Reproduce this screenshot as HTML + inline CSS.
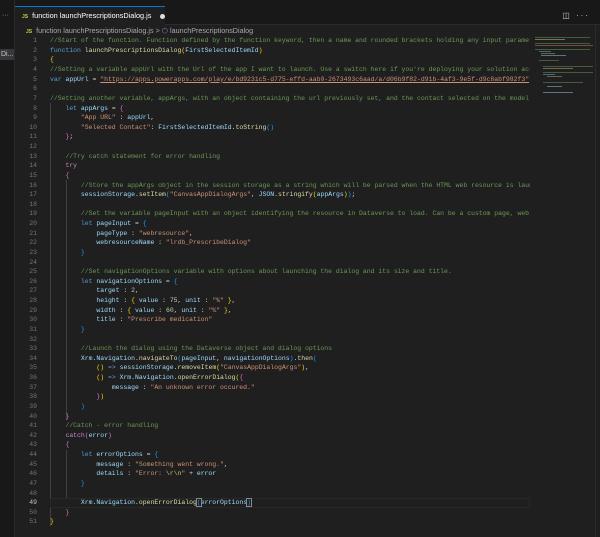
<!DOCTYPE html>
<html><head><meta charset="utf-8"><style>
*{margin:0;padding:0;box-sizing:border-box}
body{width:600px;height:537px;background:#1f1f1f;overflow:hidden;position:relative;font-family:"Liberation Sans",sans-serif}
#title{position:absolute;left:0;top:0;width:600px;height:6px;background:#181818}
#side{position:absolute;left:0;top:0;width:15px;height:537px;background:#181818;border-right:1px solid #2b2b2b}
#side .d{position:absolute;left:0;top:49px;width:14px;height:11px;background:#37373d;color:#ccc;font-size:7px;line-height:11px;padding-left:1px;white-space:nowrap;overflow:hidden}
#side .dots{position:absolute;left:2px;top:12px;color:#aaa;font-size:7px}
#tabs{position:absolute;left:15px;top:6px;width:585px;height:19px;background:#181818;border-bottom:1px solid #2b2b2b}
#tab{position:absolute;left:0;top:0;width:150px;height:19px;background:#1f1f1f;border-top:1px solid #0078d4;color:#fff;font-size:7.3px;line-height:18px;padding-left:7px;white-space:nowrap}
.js{color:#cbcb41;font-weight:bold;font-size:5px;margin-right:4px}
#tab .dot{display:inline-block;width:5px;height:5px;border-radius:50%;background:#ddd;margin-left:9px;vertical-align:middle}
#tabr{position:absolute;right:10px;top:5px;color:#ccc;font-size:8px;letter-spacing:2px}
#crumb{position:absolute;left:26px;top:26px;color:#a9a9a9;font-size:7.2px;white-space:nowrap}
#code{position:absolute;left:15px;top:36.2px;width:515px;height:500px;overflow:hidden}
.ln{position:absolute;left:0;width:22px;text-align:right;color:#6e7681;font-family:"Liberation Mono",monospace;font-size:6.45px;line-height:9.62px}
pre{position:absolute;left:35px;top:0;font-family:"Liberation Mono",monospace;font-size:6.45px;line-height:9.62px;color:#d4d4d4;white-space:pre}
.c{color:#6a9955}.k{color:#569cd6}.f{color:#dcdcaa}.s{color:#ce9178}.v{color:#9cdcfe}.y{color:#ffd700}.p{color:#da70d6}.b{color:#179fff}.x{color:#c586c0}.u{text-decoration:underline;text-decoration-color:#ce9178}
#cur{position:absolute;left:35px;top:461.8px;width:480px;height:9.62px;border:1px solid #282828}
#mini{position:absolute;left:533px;top:36px;width:62px;height:60px}
#mini div{position:absolute;height:1px;background:#5a6d52;opacity:.8}
#sb{position:absolute;left:595px;top:25px;width:5px;height:512px;background:#1f1f1f;border-left:1px solid #2b2b2b}
.g{position:absolute;width:1px;background:#404040}
</style></head><body>
<div id="title"></div>
<div id="side"><div class="dots">···</div><div class="d">Di...</div></div>
<div id="tabs"><div id="tab"><span class="js">JS</span>function launchPrescriptionsDialog.js<span class="dot"></span></div><div id="tabr">◫ ···</div></div>
<div id="crumb"><span class="js">JS</span>function launchPrescriptionsDialog.js &gt; <span style="color:#b180d7">⬡</span> launchPrescriptionsDialog</div>
<div id="code">
<div class="g" style="left:35px;top:67px;height:423px"></div>
<div class="g" style="left:51px;top:144px;height:240px"></div>
<div class="g" style="left:51px;top:414px;height:48px"></div>
<div class="ln">1<br>2<br>3<br>4<br>5<br>6<br>7<br>8<br>9<br>10<br>11<br>12<br>13<br>14<br>15<br>16<br>17<br>18<br>19<br>20<br>21<br>22<br>23<br>24<br>25<br>26<br>27<br>28<br>29<br>30<br>31<br>32<br>33<br>34<br>35<br>36<br>37<br>38<br>39<br>40<br>41<br>42<br>43<br>44<br>45<br>46<br>47<br>48<br><span style="color:#ccc">49</span><br>50<br>51</div>
<div id="cur"></div>
<pre><span class="c">//Start of the function. Function defined by the function keyword, then a name and rounded brackets holding any input parameters</span>
<span class="k">function</span> <span class="f">launchPrescriptionsDialog</span><span class="y">(</span><span class="v">FirstSelectedItemId</span><span class="y">)</span>
<span class="y">{</span>
<span class="c">//Setting a variable appUrl with the Url of the app I want to launch. Use a switch here if you're deploying your solution across</span>
<span class="k">var</span> <span class="v">appUrl</span> = <span class="s u">"https://apps.powerapps.com/play/e/bd9231c5-d775-effd-aab0-2673493c6aad/a/d06b9f82-d91b-4af3-9e5f-d9c8abf982f3"</span>

<span class="c">//Setting another variable, appArgs, with an object containing the url previously set, and the contact selected on the model</span>
    <span class="k">let</span> <span class="v">appArgs</span> = <span class="p">{</span>
        <span class="s">"App URL"</span> : <span class="v">appUrl</span>,
        <span class="s">"Selected Contact"</span>: <span class="v">FirstSelectedItemId</span>.<span class="f">toString</span><span class="b">()</span>
    <span class="p">}</span>;

    <span class="c">//Try catch statement for error handling</span>
    <span class="x">try</span>
    <span class="p">{</span>
        <span class="c">//Store the appArgs object in the session storage as a string which will be parsed when the HTML web resource is launched</span>
        <span class="v">sessionStorage</span>.<span class="f">setItem</span><span class="b">(</span><span class="s">"CanvasAppDialogArgs"</span>, <span class="v">JSON</span>.<span class="f">stringify</span><span class="y">(</span><span class="v">appArgs</span><span class="y">)</span><span class="b">)</span>;

        <span class="c">//Set the variable pageInput with an object identifying the resource in Dataverse to load. Can be a custom page, web</span>
        <span class="k">let</span> <span class="v">pageInput</span> = <span class="b">{</span>
            <span class="v">pageType</span> : <span class="s">"webresource"</span>,
            <span class="v">webresourceName</span> : <span class="s">"lrdb_PrescribeDialog"</span>
        <span class="b">}</span>

        <span class="c">//Set navigationOptions variable with options about launching the dialog and its size and title.</span>
        <span class="k">let</span> <span class="v">navigationOptions</span> = <span class="b">{</span>
            <span class="v">target</span> : <span style="color:#b5cea8">2</span>,
            <span class="v">height</span> : <span class="y">{</span> <span class="v">value</span> : <span style="color:#b5cea8">75</span>, <span class="v">unit</span> : <span class="s">"%"</span> <span class="y">}</span>,
            <span class="v">width</span> : <span class="y">{</span> <span class="v">value</span> : <span style="color:#b5cea8">60</span>, <span class="v">unit</span> : <span class="s">"%"</span> <span class="y">}</span>,
            <span class="v">title</span> : <span class="s">"Prescribe medication"</span>
        <span class="b">}</span>

        <span class="c">//Launch the dialog using the Dataverse object and dialog options</span>
        <span class="v">Xrm</span>.<span class="v">Navigation</span>.<span class="f">navigateTo</span><span class="b">(</span><span class="v">pageInput</span>, <span class="v">navigationOptions</span><span class="b">)</span>.<span class="f">then</span><span class="b">(</span>
            <span class="y">()</span> <span class="k">=&gt;</span> <span class="v">sessionStorage</span>.<span class="f">removeItem</span><span class="y">(</span><span class="s">"CanvasAppDialogArgs"</span><span class="y">)</span>,
            <span class="y">()</span> <span class="k">=&gt;</span> <span class="v">Xrm</span>.<span class="v">Navigation</span>.<span class="f">openErrorDialog</span><span class="y">(</span><span class="p">{</span>
                <span class="v">message</span> : <span class="s">"An unknown error occured."</span>
            <span class="p">}</span><span class="y">)</span>
        <span class="b">)</span>
    <span class="p">}</span>
    <span class="c">//Catch - error handling</span>
    <span class="x">catch</span><span class="p">(</span><span class="v">error</span><span class="p">)</span>
    <span class="p">{</span>
        <span class="k">let</span> <span class="v">errorOptions</span> = <span class="b">{</span>
            <span class="v">message</span> : <span class="s">"Something went wrong."</span>,
            <span class="v">details</span> : <span class="s">"Error: <span style="color:#d7ba7d">\r\n</span>"</span> + <span class="v">error</span>
        <span class="b">}</span>

        <span class="v">Xrm</span>.<span class="v">Navigation</span>.<span class="f">openErrorDialog</span><span class="b" style="outline:1px solid #888">(</span><span class="v">errorOptions</span><span class="b" style="outline:1px solid #888">)</span>
    <span class="p">}</span>
<span class="y">}</span></pre>
</div>
<div id="mini">
<div style="left:2px;top:1px;width:55px;background:#4f6a45"></div>
<div style="left:2px;top:3px;width:30px;background:#8a8a6a"></div>
<div style="left:2px;top:7px;width:55px;background:#4f6a45"></div>
<div style="left:2px;top:9px;width:58px;background:#8a5a45"></div>
<div style="left:2px;top:13px;width:55px;background:#4f6a45"></div>
<div style="left:6px;top:15px;width:12px;background:#4f7a9a"></div>
<div style="left:8px;top:17px;width:14px;background:#8a6a55"></div>
<div style="left:8px;top:19px;width:25px;background:#6a8a9a"></div>
<div style="left:6px;top:24px;width:20px;background:#4f6a45"></div>
<div style="left:10px;top:30px;width:50px;background:#4f6a45"></div>
<div style="left:10px;top:32px;width:30px;background:#8a7a55"></div>
<div style="left:10px;top:36px;width:50px;background:#4f6a45"></div>
<div style="left:10px;top:38px;width:12px;background:#4f7a9a"></div>
<div style="left:14px;top:40px;width:15px;background:#8a6a55"></div>
<div style="left:10px;top:46px;width:40px;background:#4f6a45"></div>
<div style="left:14px;top:50px;width:15px;background:#6a8a9a"></div>
<div style="left:10px;top:56px;width:30px;background:#6a8a9a"></div>
</div>
<div id="sb"></div>
</body></html>
